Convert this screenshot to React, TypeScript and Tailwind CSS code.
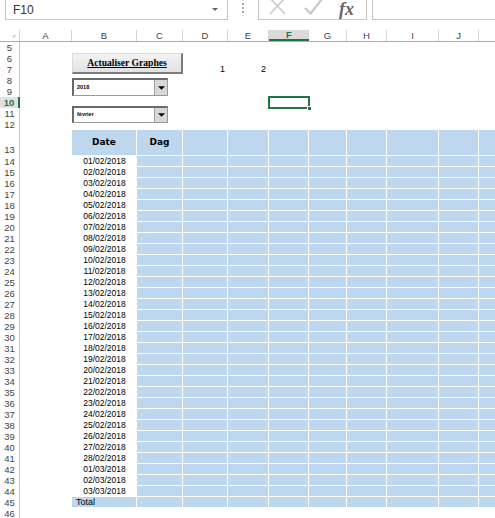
import React from 'react';

type Col = { id: string; w: string };

const COLS: Col[] = [
  { id: 'A', w: 'w-[52px]' },
  { id: 'B', w: 'w-[65px]' },
  { id: 'C', w: 'w-[46px]' },
  { id: 'D', w: 'w-[45px]' },
  { id: 'E', w: 'w-[41px]' },
  { id: 'F', w: 'w-[40px]' },
  { id: 'G', w: 'w-[38px]' },
  { id: 'H', w: 'w-[40px]' },
  { id: 'I', w: 'w-[52px]' },
  { id: 'J', w: 'w-[40px]' },
  { id: 'K', w: 'w-[60px]' },
];

const pad = (n: number) => String(n).padStart(2, '0');

const DATES: string[] = [
  ...Array.from({ length: 28 }, (_, i) => `${pad(i + 1)}/02/2018`),
  '01/03/2018',
  '02/03/2018',
  '03/03/2018',
];

const BLUE = 'bg-[#bdd7ee] border-r border-b border-white';

const RowLabel: React.FC<{ n: number; tall?: boolean; active?: boolean }> = ({ n, tall, active }) => (
  <div
    className={`w-[20px] shrink-0 flex justify-center text-[9.5px] leading-[11px] ${tall ? 'items-end pb-[1px]' : 'items-center'} ${
      active
        ? 'bg-[#e1e1e1] border-r-2 border-[#217346] text-[#217346] font-bold'
        : 'border-r border-[#c8c8c8] text-[#444]'
    }`}
  >
    {n}
  </div>
);

const Caret: React.FC<{ className?: string }> = ({ className }) => (
  <svg viewBox="0 0 8 4" className={className}>
    <path d="M0 0h8L4 4z" fill="currentColor" />
  </svg>
);

const FormulaBar: React.FC = () => (
  <div className="flex h-[20px]">
    <div className="ml-[5px] w-[223px] border-x border-b border-[#c6c6c6] flex items-center justify-between pl-[7px] pr-[9px]">
      <span className="text-[12px] text-[#333]">F10</span>
      <Caret className="w-[6px] h-[3px] text-[#666]" />
    </div>
    <div className="w-[30px] flex flex-col items-center pt-[3px] gap-[2px]">
      <span className="w-[2px] h-[2px] bg-[#a8a8a8]" />
      <span className="w-[2px] h-[2px] bg-[#a8a8a8]" />
      <span className="w-[2px] h-[2px] bg-[#a8a8a8]" />
    </div>
    <div className="w-[109px] border-x border-b border-[#c6c6c6] flex items-start pl-[8px] gap-[16px] overflow-hidden">
      <svg viewBox="0 0 20 16" className="w-[20px] h-[16px]">
        <path d="M3 -2L18 14M18 -2L3 14" stroke="#cacaca" strokeWidth="1.6" fill="none" />
      </svg>
      <svg viewBox="0 0 20 16" className="w-[20px] h-[16px]">
        <path d="M2 8L7.5 13.5L19 -1" stroke="#cacaca" strokeWidth="2.4" fill="none" />
      </svg>
      <span className="font-['Liberation_Serif',serif] italic font-bold text-[18px] leading-[16px] text-[#666] mt-[1px]">fx</span>
    </div>
    <div className="ml-[5px] flex-1 border-l border-b border-[#c6c6c6]" />
  </div>
);

const ColumnHeader: React.FC = () => (
  <div className="flex h-[12px] border-b border-[#ababab]">
    <div className="w-[20px] shrink-0 relative border-r border-[#d4d4d4]">
      <Caret className="absolute right-[2px] bottom-[2px] w-[5px] h-[5px] text-[#d0d0d0] rotate-[-45deg]" />
    </div>
    {COLS.map((c) => (
      <div
        key={c.id}
        className={`${c.w} shrink-0 flex items-center justify-center text-[9.5px] leading-[11px] ${
          c.id === 'F'
            ? 'bg-[#dadada] border-b-2 border-[#217346] text-[#217346] font-bold'
            : 'border-r border-[#d4d4d4] text-[#444]'
        }`}
      >
        {c.id === 'K' ? '' : c.id}
      </div>
    ))}
  </div>
);

const Combo: React.FC<{ top: string; h: string; label: string }> = ({ top, h, label }) => (
  <div
    className={`absolute left-[72px] ${top} w-[96px] ${h} bg-white border border-[#9a9a9a] border-t-2 border-l-2 border-t-[#6a6a6a] border-l-[#6a6a6a] flex items-center`}
  >
    <span className="flex-1 pl-[3px] text-[5.5px] font-bold leading-none text-black">{label}</span>
    <div className="w-[13px] h-full bg-[#d8d8d8] border-l border-[#a0a0a0] flex items-center justify-center">
      <Caret className="w-[7px] h-[4px] text-black" />
    </div>
  </div>
);

export default function App() {
  const rows: React.ReactNode[] = [];

  for (let n = 5; n <= 12; n++) {
    rows.push(
      <div key={n} className="flex h-[11px]">
        <RowLabel n={n} active={n === 10} />
        {COLS.map((c) => (
          <div key={c.id} className={`${c.w} shrink-0 flex items-center justify-end pr-[3px] text-[9px] leading-[11px]`}>
            {n === 7 && c.id === 'D' ? '1' : n === 7 && c.id === 'E' ? '2' : ''}
          </div>
        ))}
      </div>
    );
  }

  rows.push(
    <div key={13} className="flex h-[26px]">
      <RowLabel n={13} tall />
      {COLS.map((c) =>
        c.id === 'A' ? (
          <div key={c.id} className={`${c.w} shrink-0`} />
        ) : (
          <div
            key={c.id}
            className={`${c.w} shrink-0 ${BLUE} flex items-center justify-center font-['DejaVu_Sans',Verdana,sans-serif] font-bold text-[9px]`}
          >
            {c.id === 'B' ? 'Date' : c.id === 'C' ? 'Dag' : ''}
          </div>
        )
      )}
    </div>
  );

  DATES.forEach((d, i) => {
    const n = 14 + i;
    rows.push(
      <div key={n} className="flex h-[11px]">
        <RowLabel n={n} />
        {COLS.map((c) =>
          c.id === 'A' ? (
            <div key={c.id} className={`${c.w} shrink-0`} />
          ) : c.id === 'B' ? (
            <div key={c.id} className={`${c.w} shrink-0 text-center text-[8.5px] leading-[11px] text-black`}>
              {d}
            </div>
          ) : (
            <div key={c.id} className={`${c.w} shrink-0 ${BLUE}`} />
          )
        )}
      </div>
    );
  });

  rows.push(
    <div key={45} className="flex h-[11px]">
      <RowLabel n={45} />
      {COLS.map((c) =>
        c.id === 'A' ? (
          <div key={c.id} className={`${c.w} shrink-0`} />
        ) : (
          <div key={c.id} className={`${c.w} shrink-0 ${BLUE} pl-[4px] text-[9px] leading-[10px] text-black`}>
            {c.id === 'B' ? 'Total' : ''}
          </div>
        )
      )}
    </div>
  );

  rows.push(
    <div key={46} className="flex h-[10px]">
      <RowLabel n={46} />
    </div>
  );

  return (
    <div className="relative w-[495px] h-[518px] overflow-hidden bg-white font-['Liberation_Sans',Arial,sans-serif]">
      <FormulaBar />
      <div className="h-[10px]" />
      <ColumnHeader />
      <div className="flex flex-col">{rows}</div>

      {/* floating controls */}
      <div className="absolute left-[72px] top-[53px] w-[111px] h-[21px] bg-linear-to-b from-[#f3f3f3] to-[#e2e2e2] border border-[#dcdcdc] border-r-2 border-b-2 border-r-[#7c7c7c] border-b-[#7c7c7c] flex items-center justify-center">
        <span className="font-['Liberation_Serif',serif] font-bold text-[9.6px] underline text-black">Actualiser Graphes</span>
      </div>
      <Combo top="top-[78px]" h="h-[18px]" label="2018" />
      <Combo top="top-[106px]" h="h-[17px]" label="février" />

      {/* active cell F10 */}
      <div className="absolute left-[268px] top-[96px] w-[42px] h-[13px] border-2 border-[#217346]">
        <div className="absolute right-[-4px] bottom-[-4px] w-[5px] h-[5px] bg-[#217346] border border-white" />
      </div>
    </div>
  );
}
